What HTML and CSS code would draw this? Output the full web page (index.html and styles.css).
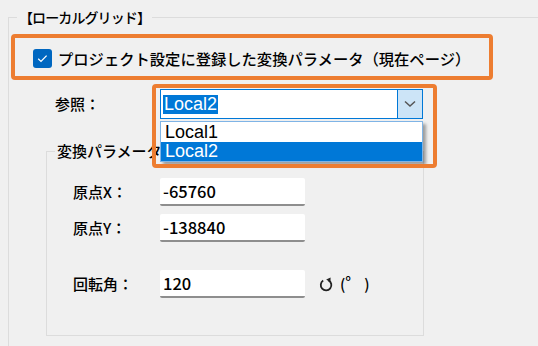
FILE: index.html
```html
<!DOCTYPE html>
<html lang="ja">
<head>
<meta charset="utf-8">
<link rel="stylesheet" href="styles.css">
</head>
<body>
<div class="grid-box">
  <div class="legend">【ローカルグリッド】</div>
  <div class="check-row">
    <span class="checkbox">
      <svg width="19" height="19" viewBox="0 0 19 19"><path d="M5.2 9.8 L8 12.4 L13.6 6.6" fill="none" stroke="#fff" stroke-width="1.3"/></svg>
    </span>
    <span class="check-label">プロジェクト設定に登録した変換パラメータ（現在ページ）</span>
  </div>
  <div class="ref-row">
    <span class="ref-label">参照：</span>
    <div class="combo">
      <div class="combo-field"><span class="combo-value">Local2</span></div>
      <div class="combo-btn">
        <svg width="12" height="8" viewBox="0 0 12 8"><path d="M1 1.5 L6 6 L11 1.5" fill="none" stroke="#555" stroke-width="1.5"/></svg>
      </div>
      <div class="combo-list">
        <div class="combo-item">Local1</div>
        <div class="combo-item selected">Local2</div>
      </div>
      <div class="highlight-frame"></div>
    </div>
  </div>
  <div class="param-box">
    <div class="param-legend">変換パラメータ</div>
    <div class="field-row first">
      <span class="field-label">原点X：</span>
      <span class="field-input">-65760</span>
    </div>
    <div class="field-row">
      <span class="field-label">原点Y：</span>
      <span class="field-input">-138840</span>
    </div>
    <div class="field-row rot">
      <span class="field-label">回転角：</span>
      <span class="field-input">120</span>
      <span class="unit">
        <svg class="rot-icon" width="16" height="16" viewBox="0 0 16 16">
          <path d="M5.2 4.6 A5.3 5.3 0 1 0 10.6 4.4" fill="none" stroke="#222" stroke-width="1.8"/>
          <polygon points="8.2,3.4 12.6,1.6 12.4,6.6" fill="#222"/>
        </svg>
        <span class="paren">(</span><span class="deg">°</span><span class="paren close">)</span>
      </span>
    </div>
  </div>
</div>
</body>
</html>
```
FILE: styles.css
```css
html, body {
  margin: 0;
  padding: 0;
}
body {
  width: 538px;
  height: 346px;
  overflow: hidden;
  background: #f0f0f0;
  font-family: "Noto Sans CJK JP", "Noto Sans", sans-serif;
  font-weight: 500;
  color: #000;
}
.grid-box {
  margin: 17px 0 0 8px;
  height: 329px;
  box-sizing: border-box;
  border-top: 1px solid #dcdcdc;
  border-left: 1px solid #dcdcdc;
}
.legend {
  width: fit-content;
  margin: -11px 0 0 8px;
  padding: 0 2px;
  background: #f0f0f0;
  font-size: 14px;
  line-height: 20px;
  letter-spacing: -0.9px;
}
.check-row {
  display: flex;
  align-items: center;
  width: 482px;
  height: 46px;
  margin: 7px 0 0 2px;
  box-sizing: border-box;
  border: 4px solid #ed7d31;
  border-radius: 4px;
  padding-left: 18px;
}
.checkbox {
  width: 19px;
  height: 19px;
  background: #0067c0;
  border-radius: 3px;
  display: flex;
  margin-top: 3px;
}
.check-label {
  margin-left: 6px;
  font-size: 15.3px;
  line-height: 20px;
  margin-top: 2px;
}
.ref-row {
  display: flex;
  align-items: center;
  margin-top: 9px;
  padding-left: 46px;
}
.ref-label {
  width: 105px;
  font-size: 15px;
  line-height: 20px;
}
.combo {
  position: relative;
  display: flex;
  width: 263px;
  height: 30px;
  box-sizing: border-box;
  border: 1px solid #0078d7;
  background: #fff;
}
.combo-field {
  flex: 1;
  display: flex;
  align-items: center;
  padding-left: 2px;
}
.combo-value {
  background: #0078d7;
  color: #fff;
  font-family: "Liberation Sans", sans-serif;
  font-weight: 400;
  font-size: 18px;
  line-height: 19px;
  padding: 0 1px;
}
.combo-btn {
  width: 25px;
  box-sizing: border-box;
  background: #cce4f7;
  border-left: 1px solid #0078d7;
  display: flex;
  align-items: center;
  justify-content: center;
}
.combo-list {
  position: absolute;
  left: -1px;
  top: 31px;
  width: 263px;
  height: 41px;
  box-sizing: border-box;
  border: 1px solid #7fb4e6;
  background: #fff;
  box-shadow: 3px 3px 3px rgba(0, 0, 0, 0.35);
}
.combo-item {
  height: 20px;
  line-height: 20px;
  padding-left: 4px;
  font-family: "Liberation Sans", sans-serif;
  font-weight: 400;
  font-size: 18px;
}
.combo-item.selected {
  height: 19px;
  line-height: 19px;
  background: #0078d7;
  color: #fff;
}
.highlight-frame {
  position: absolute;
  left: -9px;
  top: -6px;
  width: 285px;
  height: 84px;
  box-sizing: border-box;
  border: 4px solid #ed7d31;
  border-radius: 4px;
}
.param-box {
  width: 378px;
  height: 185px;
  margin: 32px 0 0 37px;
  box-sizing: border-box;
  border: 1px solid #dcdcdc;
}
.param-legend {
  width: fit-content;
  margin: -11px 0 0 8px;
  padding: 0 2px;
  background: #f0f0f0;
  font-size: 15px;
  line-height: 20px;
}
.field-row {
  display: flex;
  align-items: center;
  height: 28px;
  margin: 8px 0 0 26px;
}
.field-row.first {
  margin-top: 17px;
}
.field-row.rot {
  margin-top: 28px;
}
.field-label {
  width: 87px;
  font-size: 15px;
  line-height: 20px;
}
.field-input {
  width: 145px;
  height: 28px;
  box-sizing: border-box;
  display: flex;
  align-items: center;
  padding-left: 3px;
  background: #fff;
  border-bottom: 2px solid #8e8e8e;
  border-radius: 2px;
  font-size: 16.5px;
}
.unit {
  display: flex;
  align-items: center;
  margin-left: 13px;
  font-size: 15px;
  line-height: 20px;
}
.rot-icon {
  margin-right: 6px;
}
.paren.close {
  margin-left: 13px;
}
.deg {
  margin-top: -4px;
}
```
